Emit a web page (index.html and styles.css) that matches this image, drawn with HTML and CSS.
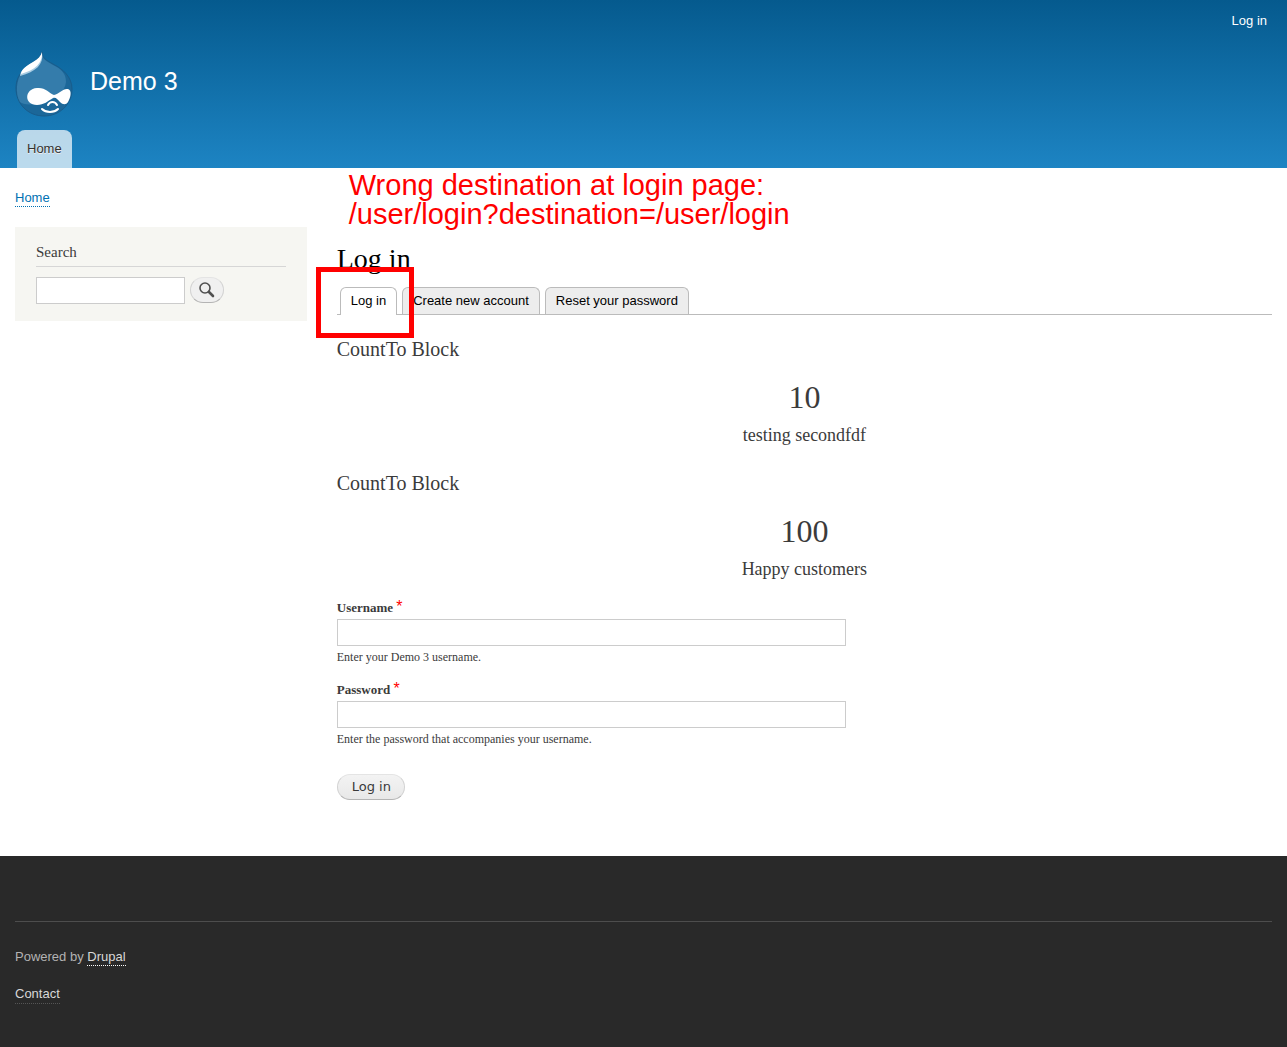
FILE: index.html
```html
<!DOCTYPE html>
<html lang="en">
<head>
    <meta charset="UTF-8">
    <meta name="viewport" content="width=device-width, initial-scale=1.0">
    <title>Log in | Demo 3</title>
    <link rel="stylesheet" href="styles.css">
</head>
<body>
    <header class="header">
        <nav class="account-menu">
            <a href="#">Log in</a>
        </nav>
        <div class="branding">
            <a class="logo" href="#" aria-label="Home">
                <svg width="58" height="66" viewBox="0 0 58 66">
                    <path d="M27 1C27 7 31 9 38 13C48 18 57 26 57 38C57 54 44 65 29 65C13 65 1 53 1 37C1 27 6 20 14 14C20 10 26 7 27 1Z" fill="#1b6799" stroke="#195c8b"/>
                    <path d="M27 2C27 8 31 10 38 14C46 18 51 22 51 31C50 41 40 49 26 52C17 54 8 54 5 51C0 43 1 28 8 20C15 13 25 9 27 2Z" fill="#347cab"/>
                    <path d="M27 2C29 13 21 21 5 25C5 21 9 16 17 12C23 9 26 6 27 2Z" fill="#a9cce2"/>
                    <path d="M27 1C28 12 20 19 6 23C6 19 11 15 18 11C23 8 26 5 27 1Z" fill="#fff"/>
                    <path d="M22 37C30 36 34 42 39 44C44 43 48 37 53 38C57 39 56 46 53 51C51 54 48 54 45 51C42 48 41 46 38 47C33 50 29 54 22 54C9 54 9 38 22 37Z" fill="#fff"/>
                    <path d="M33 54C35 50 40 50 42 54M27 58C31 62 39 62 43 58" fill="none" stroke="#fff" stroke-width="2" stroke-linecap="round"/>
                </svg>
            </a>
            <a class="site-name" href="#">Demo 3</a>
        </div>
        <nav class="main-menu">
            <a href="#">Home</a>
        </nav>
    </header>

    <div class="page">
        <aside class="sidebar">
            <nav class="breadcrumb">
                <a href="#">Home</a>
            </nav>
            <section class="search-block">
                <h2>Search</h2>
                <form class="search-form">
                    <input type="search" class="search-input" aria-label="Search">
                    <button type="button" class="button search-button" aria-label="Search">
                        <svg width="16" height="16" viewBox="0 0 16 16">
                            <circle cx="6" cy="6" r="5" fill="none" stroke="#505050" stroke-width="1.6"/>
                            <path d="M10 10L14 14" stroke="#505050" stroke-width="2.6" stroke-linecap="round"/>
                        </svg>
                    </button>
                </form>
            </section>
        </aside>

        <main class="content">
            <p class="note">Wrong destination at login page:<br>/user/login?destination=/user/login</p>
            <div class="note-box"></div>

            <h1>Log in</h1>
            <nav class="tabs">
                <a class="active" href="#">Log in</a>
                <a href="#">Create new account</a>
                <a href="#">Reset your password</a>
            </nav>

            <section class="count-block">
                <h2>CountTo Block</h2>
                <div class="count">10</div>
                <div class="count-label">testing secondfdf</div>
            </section>
            <section class="count-block">
                <h2>CountTo Block</h2>
                <div class="count">100</div>
                <div class="count-label">Happy customers</div>
            </section>

            <form class="login-form">
                <div class="form-item">
                    <label for="name">Username <span class="required">*</span></label>
                    <input type="text" id="name">
                    <div class="description">Enter your Demo 3 username.</div>
                </div>
                <div class="form-item">
                    <label for="pass">Password <span class="required">*</span></label>
                    <input type="password" id="pass">
                    <div class="description">Enter the password that accompanies your username.</div>
                </div>
                <button type="button" class="button login-button">Log in</button>
            </form>
        </main>
    </div>

    <footer class="footer">
        <div class="footer-inner">
            <p>Powered by <a class="powered" href="#">Drupal</a></p>
            <p><a class="contact" href="#">Contact</a></p>
        </div>
    </footer>
</body>
</html>
```
FILE: styles.css
```css
* {
    box-sizing: border-box;
}
body {
    margin: 0;
    min-height: 100vh;
    display: flex;
    flex-direction: column;
    font-family: "Liberation Serif", Georgia, serif;
    font-size: 14px;
    line-height: 20px;
    color: #3b3b3b;
    background: #fff;
}
a {
    font-family: "Liberation Sans", Arial, sans-serif;
    text-decoration: none;
}
h1, h2, p {
    margin: 0;
    font-weight: normal;
}

/* header */
.header {
    padding: 11px 15px 0;
    background: linear-gradient(to bottom, #055a8e 0%, #1d84c3 100%);
}
.account-menu {
    display: flex;
    justify-content: flex-end;
    padding: 0 5px;
}
.account-menu a {
    font-size: 13px;
    color: #fff;
}
.branding {
    display: flex;
    gap: 17px;
    padding-top: 20px;
}
.logo svg {
    display: block;
}
.site-name {
    padding-top: 15px;
    font-size: 25px;
    line-height: 30px;
    color: #fff;
}
.main-menu {
    display: flex;
    padding: 13px 2px 0;
}
.main-menu a {
    padding: 9px 10px;
    border-radius: 8px 8px 0 0;
    background: rgba(255, 255, 255, 0.7);
    font-size: 13px;
    color: #333;
    text-shadow: 0 1px #eee;
}

/* columns */
.page {
    display: flex;
    flex: 1;
}
.sidebar {
    width: 25%;
    padding: 20px 15px;
}
.content {
    position: relative;
    width: 75%;
    padding: 76px 15px 56px;
}
.breadcrumb {
    font-size: 13px;
}
.breadcrumb a {
    padding-bottom: 1px;
    color: #0071b3;
    border-bottom: 1px dotted #0071b3;
}
.search-block {
    margin-top: 19px;
    padding: 15px 21px 17px;
    background: #f6f6f2;
}
.search-block h2 {
    padding-bottom: 4px;
    border-bottom: 1px solid #d6d6d6;
    font-size: 15px;
}
.search-form {
    display: flex;
    gap: 5px;
    margin-top: 10px;
}
input {
    display: block;
    height: 27px;
    padding: 4px;
    border: 1px solid #ccc;
    border-radius: 0;
    background: #fff;
    font-family: inherit;
    font-size: 13px;
    appearance: none;
}
.search-input {
    width: 149px;
}
.button {
    height: 26px;
    border: 1px solid #e4e4e4;
    border-bottom-color: #b4b4b4;
    border-left-color: #d2d2d2;
    border-right-color: #d2d2d2;
    border-radius: 15px;
    background: linear-gradient(to bottom, #f3f3f3, #e8e8e8);
    color: #3a3a3a;
    cursor: pointer;
}
.search-button {
    width: 34px;
    padding: 0 0 1px 8px;
    background: #f0f0f0;
}
.search-button svg {
    display: block;
}

/* red marks over the page */
.note {
    position: absolute;
    top: 3px;
    left: 27px;
    font-family: "Liberation Sans", Arial, sans-serif;
    font-size: 29px;
    line-height: 29px;
    color: #f00;
}
.note-box {
    position: absolute;
    top: 99px;
    left: -6px;
    width: 98px;
    height: 71px;
    border: 5px solid #f00;
}

/* content */
h1 {
    font-size: 28px;
    line-height: 30px;
    color: #000;
}
.tabs {
    display: flex;
    gap: 5px;
    margin-top: 13px;
    padding: 0 3px;
    border-bottom: 1px solid #bbb;
}
.tabs a {
    height: 27px;
    padding: 0 10px;
    border: 1px solid #bbb;
    border-bottom: 0;
    border-radius: 6px 6px 0 0;
    background: #ededed;
    font-size: 13px;
    line-height: 26px;
    color: #000;
}
.tabs .active {
    height: 28px;
    margin-bottom: -1px;
    background: #fff;
}
.count-block {
    margin-top: 22px;
    padding-bottom: 1px;
}
.count-block h2 {
    font-size: 20px;
    line-height: 24px;
}
.count {
    margin-top: 17px;
    font-size: 32px;
    line-height: 38px;
    text-align: center;
}
.count-label {
    margin-top: 6px;
    font-size: 18px;
    line-height: 26px;
    text-align: center;
}
.login-form {
    margin-top: 15px;
}
.form-item {
    margin-bottom: 13px;
}
.form-item label {
    display: block;
    padding-bottom: 1px;
    font-size: 13px;
    font-weight: bold;
}
.form-item input {
    width: 509px;
    max-width: 100%;
}
.required {
    font-family: "Liberation Sans", Arial, sans-serif;
    font-size: 16px;
    font-weight: normal;
    line-height: 1;
    color: #f00;
}
.description {
    padding-top: 1px;
    font-size: 12px;
}
.login-button {
    margin-top: 12px;
    padding: 0 13px 1px 14px;
    font-family: "DejaVu Sans", sans-serif;
    font-size: 13px;
}

/* footer */
.footer {
    padding: 65px 15px 34px;
    background: #292929;
    color: #b3b3b3;
}
.footer-inner {
    padding-top: 25px;
    border-top: 1px solid #4d4d4d;
    font-family: "Liberation Sans", Arial, sans-serif;
}
.footer p {
    margin-bottom: 17px;
    font-size: 13px;
}
.powered {
    padding-bottom: 1px;
    color: #d8d8d8;
    border-bottom: 1px dotted #fff;
}
.contact {
    padding-bottom: 2px;
    color: #d8d8d8;
    border-bottom: 1px dotted #555;
}
```
